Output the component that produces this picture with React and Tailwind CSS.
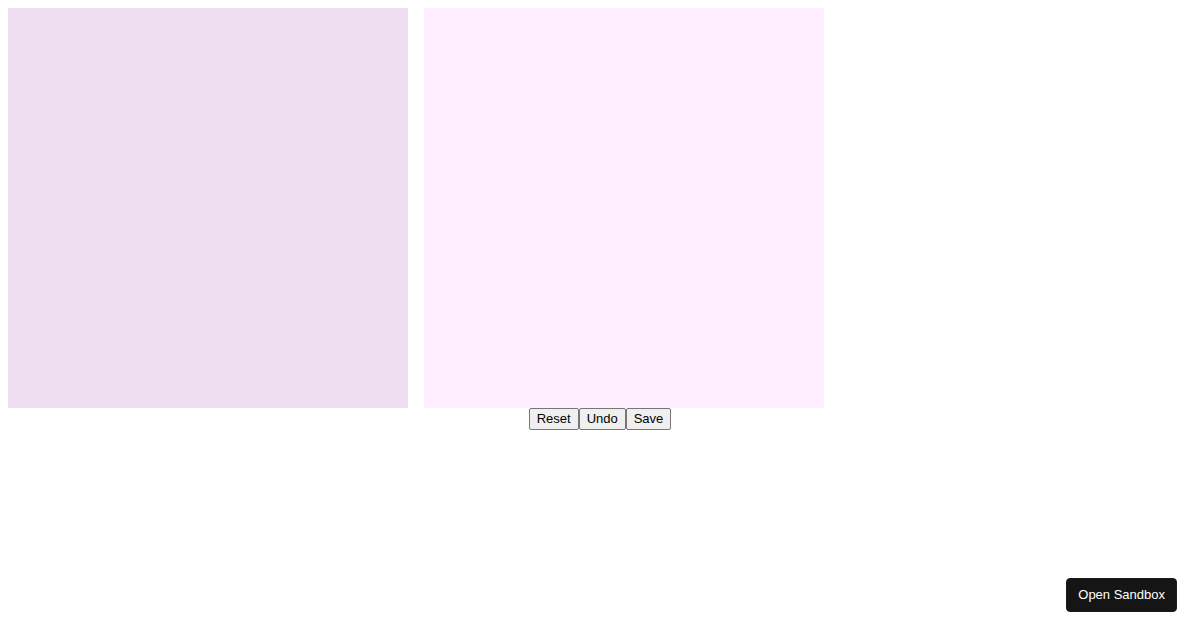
import { useState } from 'react'

function Pad({ className, onPick }) {
  return (
    <div
      className={`size-[400px] shrink-0 ${className}`}
      onClick={e => {
        const box = e.currentTarget.getBoundingClientRect()
        onPick({ x: e.clientX - box.left, y: e.clientY - box.top })
      }}
    />
  )
}

function ToolButton({ children, onClick }) {
  return (
    <button
      type="button"
      onClick={onClick}
      className="rounded-[2px] border border-[#767676] bg-[#efefef] px-[7px] text-[13px] leading-5 text-black"
    >
      {children}
    </button>
  )
}

export default function App() {
  const [points, setPoints] = useState([])

  const add = p => setPoints([...points, p])

  return (
    <div className="min-h-screen bg-white p-2 font-['Liberation_Sans',Arial,sans-serif]">
      <div className="flex gap-4">
        <Pad className="bg-[#eeddee]" onPick={add} />
        <Pad className="bg-[#ffeeff]" onPick={add} />
      </div>

      <div className="flex justify-center">
        <ToolButton onClick={() => setPoints([])}>Reset</ToolButton>
        <ToolButton onClick={() => setPoints(points.slice(0, -1))}>Undo</ToolButton>
        <ToolButton onClick={() => localStorage.setItem('points', JSON.stringify(points))}>Save</ToolButton>
      </div>

      <button
        type="button"
        className="fixed right-[23px] bottom-[18px] h-[34px] rounded border border-[#211a1c] bg-[#151515] px-[11px] text-[13px] leading-4 text-white"
      >
        Open Sandbox
      </button>
    </div>
  )
}
